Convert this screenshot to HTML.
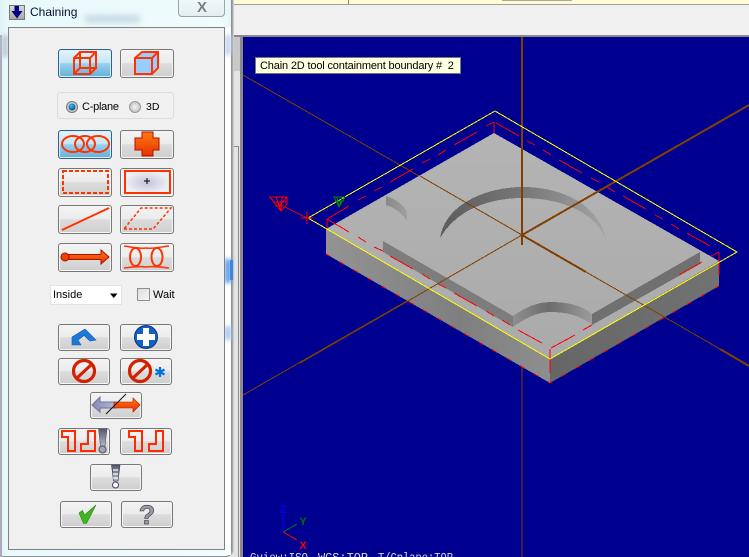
<!DOCTYPE html>
<html><head><meta charset="utf-8"><style>
html,body{margin:0;padding:0;width:749px;height:557px;overflow:hidden;background:#f0f0f0;font-family:"Liberation Sans",sans-serif}
div{position:absolute;box-sizing:border-box}
.b{border:1px solid #777;border-radius:3px;background:linear-gradient(#f3f3f3 0,#ececec 48%,#dcdcdc 50%,#cfcfcf 100%);box-shadow:inset 0 0 0 1px #f6f6f6}
.a{border:1px solid #2c628b;border-radius:3px;background:linear-gradient(#e5f4fc 0,#c4e5f6 48%,#98d1ef 50%,#66afd7 100%);box-shadow:inset 0 0 0 1px #d8eef8}
.t{font-size:11px;color:#000;white-space:nowrap;line-height:14px}
svg{position:absolute;left:0;top:0}
</style></head><body>
<!-- background app -->
<div style="left:232px;top:0;width:517px;height:4px;background:#fdfcd2"></div>
<div style="left:232px;top:4px;width:517px;height:1px;background:#a0a0a0"></div>
<div style="left:348px;top:0;width:1px;height:4px;background:#888"></div>
<div style="left:502px;top:0;width:70px;height:1px;background:#aaa"></div>
<div style="left:232px;top:5px;width:517px;height:30px;background:#f0f0f0"></div>
<div style="left:232px;top:35px;width:517px;height:2px;background:#8a8a8a"></div>
<div style="left:232px;top:37px;width:9px;height:520px;background:#e4e4e4"></div>
<div style="left:232px;top:37px;width:9px;height:34px;background:#c8c8c8"></div>
<div style="left:238px;top:146px;width:1px;height:411px;background:#8a8a8a"></div>
<div style="left:232px;top:146px;width:6px;height:1px;background:#8a8a8a"></div>
<div style="left:240px;top:35px;width:3px;height:522px;background:#8a8a8a"></div>
<div style="left:243px;top:37px;width:506px;height:520px;background:#000090"></div>

<!-- CAD viewport -->
<svg width="749" height="557" viewBox="0 0 749 557" style="shape-rendering:crispEdges">
<defs>
<linearGradient id="gl" x1="0" x2="1" y1="0" y2="0"><stop offset="0" stop-color="#939393"/><stop offset=".6" stop-color="#7f7f7f"/><stop offset="1" stop-color="#8e8e8e"/></linearGradient>
<linearGradient id="gr" x1="0" x2="1" y1="0" y2="0"><stop offset="0" stop-color="#666"/><stop offset="1" stop-color="#727272"/></linearGradient>
<linearGradient id="gtop" x1="0" x2="0" y1="0" y2="1"><stop offset="0" stop-color="#b4b4b4"/><stop offset="1" stop-color="#aaa"/></linearGradient>
<linearGradient id="ga" x1="0" x2="1" y1="0" y2="0"><stop offset="0" stop-color="#5c5c5c"/><stop offset=".5" stop-color="#777"/><stop offset="1" stop-color="#a4a4a4"/></linearGradient>
<linearGradient id="gb" x1="0" x2="1" y1="0" y2="0"><stop offset="0" stop-color="#8f8f8f"/><stop offset=".45" stop-color="#6c6c6c"/><stop offset="1" stop-color="#9c9c9c"/></linearGradient>
<linearGradient id="gc" x1="0" x2="1" y1="0" y2="0"><stop offset="0" stop-color="#888"/><stop offset="1" stop-color="#a0a0a0"/></linearGradient>
</defs>
<g fill="none" stroke="#804000">
<path d="M243,75L522,235"/>
<path d="M243,395L522,235"/>
</g>
<path d="M522,367V557" stroke="#804000" stroke-width="1"/>
<path d="M326,229L550,359V383L326,254Z" fill="url(#gl)"/>
<path d="M550,359L719,261V286L550,383Z" fill="url(#gr)"/>
<path d="M494,133L326,229L550,359L719,261Z" fill="url(#gtop)"/>
<path d="M326,254L550,383L719,286" fill="none" stroke="#f00" stroke-dasharray="5 11"/>
<!-- walls -->
<path d="M440,238C445,205 485,187 523,187C565,187 600,207 606,240C596,212 560,198 523,198C485,198 455,212 440,238Z" fill="url(#ga)"/>
<path d="M386,196C396,199 405,206 407,213V221C402,213 394,207 386,205Z" fill="url(#gc)"/>
<path d="M383,241L513,316V327L383,252Z" fill="#7d7d7d"/>
<path d="M513,316C525,307 538,302 550,302C567,302 582,305 592,314V325C582,316 567,312 550,312C538,312 525,318 513,327Z" fill="url(#gb)"/>
<path d="M592,314L700,252V264L592,325Z" fill="#707070"/>
<!-- red chain -->
<g fill="none" stroke="#f00" stroke-width="1">
<path d="M327,219L349,206M358,200L366,196M374,191L382,187M390,182L413,169M422,163L430,159M438,155L446,150M454,145L477,132M486,126L494,122"/>
<path d="M496,123L519,136M527,141L535,145M543,150L551,155M559,160L582,173M591,178L599,182M607,187L615,192M623,196L646,209M655,215L663,219M671,224L679,229M687,233L710,246"/>
<path d="M327,219L349,232M358,237L366,242M374,247L383,251M390,256L413,269M422,274L430,279M438,284L446,288M454,293L477,306M486,311L494,316M502,320L510,325M518,330L542,343"/>
<path d="M551,348L575,335M583,330L592,325M679,275L702,262M711,256L719,252"/>
<path d="M494,122V133M327,219V229"/>
<path d="M719,252V275M550,349V373"/>
</g>
<!-- brown over -->
<g fill="none" stroke="#804000">
<path d="M420,176L522,235M408,301L522,235M408,301L300,363" stroke-width="1"/>
<path d="M522,37V245" stroke-width="2"/>
<path d="M522,235L749,105" stroke-width="2"/>
<path d="M522,235L586,272" stroke-width="2"/>
<path d="M586,272L720,349" stroke-width="1"/>
<path d="M720,349L749,366" stroke-width="2"/>
</g>
<!-- yellow -->
<path d="M495,111L308,218L550,359L737,252Z" fill="none" stroke="#ff0" stroke-width="1"/>
<!-- origin cones -->
<g fill="none" stroke="#f00" stroke-width="1">
<path d="M307,212V224M301,218H313"/>
<path d="M307,218L285,207"/>
<path d="M270,197H287V204L281,211ZM276,197L281,211M282,197L281,211M273,202L287,202M275,206L284,206M287,197L279,206"/>
</g>
<g fill="none" stroke="#080" stroke-width="1">
<path d="M334,197H345L339,207ZM337,197L339,207M342,197L339,207M335,201H344"/>
</g>
<!-- axis -->
<path d="M283,532V515" stroke="#00f"/>
<path d="M283,532L297,524" stroke="#070"/>
<path d="M283,532L297,540" stroke="#f00"/>
<g font-family="Liberation Sans" font-size="11" font-weight="bold" text-anchor="middle">
<text x="283" y="513" fill="#0000ff">Z</text>
<text x="303" y="525" fill="#007000">Y</text>
<text x="303" y="549" fill="#ff0000">X</text>
</g>
<g font-family="Liberation Mono" font-size="12" fill="#ddd" style="shape-rendering:auto">
<text x="250" y="561" textLength="58" lengthAdjust="spacingAndGlyphs">Gview:ISO</text>
<text x="318" y="561" textLength="50" lengthAdjust="spacingAndGlyphs">WCS:TOP</text>
<text x="378" y="561" textLength="75" lengthAdjust="spacingAndGlyphs">T/Cplane:TOP</text>
</g>
</svg>

<!-- tooltip -->
<div class="t" style="left:255px;top:57px;width:206px;height:17px;background:#ffffe1;border:1px solid #777;padding:1px 0 0 4px;letter-spacing:-.16px">Chain 2D tool containment boundary #&nbsp; 2</div>

<!-- dialog window -->
<div style="left:0;top:0;width:232px;height:557px;background:linear-gradient(90deg,#dff3f6 0,#e8f9fb 3%,#f0fcfd 96%,#e4f4f6 100%);border-right:1px solid #8a9396;border-bottom:1px solid #8a9396;border-bottom-right-radius:7px;box-shadow:1px 0 0 #a8a8a8,2px 0 0 #ccc"></div>
<div style="left:0;top:35px;width:2px;height:522px;background:#aab"></div>
<div style="left:225px;top:27px;width:6px;height:528px;background:#fff"></div>
<div style="left:2px;top:35px;width:6px;height:22px;background:#c0c8d4;filter:blur(2px)"></div>
<div style="left:225px;top:35px;width:6px;height:20px;background:#c4d4ee;filter:blur(2px)"></div>
<div style="left:225px;top:259px;width:6px;height:24px;background:#4f9cf0;filter:blur(2px)"></div>
<div style="left:225px;top:326px;width:6px;height:14px;background:#a8c8f0;filter:blur(2px)"></div>
<div style="left:230px;top:260px;width:3px;height:20px;background:#3f86d8"></div>
<div style="left:85px;top:15px;width:55px;height:8px;background:#c8dce6;filter:blur(3px)"></div>
<!-- close -->
<div style="left:178px;top:-3px;width:47px;height:20px;border:1px solid #9aa3a6;border-radius:0 0 4px 4px;background:linear-gradient(#f2fafb,#e4eef0)"></div>
<div style="left:197px;top:0;width:14px;height:15px;font:bold 15px/15px 'Liberation Sans',sans-serif;color:#787f83;text-shadow:0 0 1px #fff">X</div>
<!-- title -->
<div style="left:9px;top:5px;width:16px;height:15px;background:linear-gradient(#d8d8d8,#a8a8a8);border:1px solid #777"></div>
<svg width="30" height="25" viewBox="0 0 30 25" style="left:0;top:0"><path d="M14.500,6H19V11H22.500L17,18.500L11.500,11H14.500Z" fill="#000080"/></svg>
<div style="left:30px;top:5px;font-size:12px;line-height:15px;color:#001030">Chaining</div>
<!-- panel -->
<div style="left:8px;top:27px;width:217px;height:523px;background:#f0f0f0;border:1px solid #808080"></div>

<!-- buttons -->
<div class="a" style="left:58px;top:49px;width:54px;height:29px"></div>
<div class="b" style="left:120px;top:49px;width:54px;height:29px"></div>
<div style="left:57px;top:92px;width:117px;height:27px;border:1px solid #dcdcdc;border-radius:3px"></div>
<div class="t" style="left:82px;top:100px;letter-spacing:-.25px">C-plane</div>
<div class="t" style="left:146px;top:100px;font-size:10.5px">3D</div>
<div class="a" style="left:58px;top:130px;width:54px;height:29px"></div>
<div class="b" style="left:120px;top:130px;width:54px;height:29px"></div>
<div class="b" style="left:58px;top:168px;width:54px;height:29px"></div>
<div class="b" style="left:120px;top:168px;width:54px;height:29px;background:radial-gradient(ellipse 22px 11px at 50% 50%,#c4c4dc,#eeeef4)"></div>
<div class="b" style="left:58px;top:205px;width:54px;height:29px"></div>
<div class="b" style="left:120px;top:205px;width:54px;height:29px"></div>
<div class="b" style="left:58px;top:243px;width:54px;height:29px"></div>
<div class="b" style="left:120px;top:243px;width:54px;height:29px"></div>
<div style="left:50px;top:285px;width:72px;height:20px;background:#fff;border:1px solid #e2e2e2"></div>
<div class="t" style="left:53px;top:288px">Inside</div>
<div style="left:137px;top:288px;width:13px;height:13px;border:1px solid #8e8f8f;background:linear-gradient(135deg,#ddd,#f6f6f6)"></div>
<div class="t" style="left:153px;top:288px">Wait</div>
<div class="b" style="left:58px;top:324px;width:52px;height:27px"></div>
<div class="b" style="left:120px;top:324px;width:52px;height:27px"></div>
<div class="b" style="left:58px;top:358px;width:52px;height:27px"></div>
<div class="b" style="left:120px;top:358px;width:52px;height:27px"></div>
<div class="b" style="left:90px;top:392px;width:52px;height:27px"></div>
<div class="b" style="left:58px;top:428px;width:52px;height:27px"></div>
<div class="b" style="left:120px;top:428px;width:52px;height:27px"></div>
<div class="b" style="left:90px;top:464px;width:52px;height:27px"></div>
<div class="b" style="left:60px;top:501px;width:52px;height:27px"></div>
<div class="b" style="left:121px;top:501px;width:52px;height:27px"></div>

<!-- icons -->
<svg width="232" height="557" viewBox="0 0 232 557">
<defs>
<linearGradient id="or" x1="0" x2="0" y1="0" y2="1"><stop offset="0" stop-color="#ff7a10"/><stop offset="1" stop-color="#e83000"/></linearGradient>
<linearGradient id="gry" x1="0" x2="0" y1="0" y2="1"><stop offset="0" stop-color="#555a70"/><stop offset="1" stop-color="#b4b8cc"/></linearGradient>
<linearGradient id="gy2" x1="0" x2="1" y1="0" y2="0"><stop offset="0" stop-color="#8888b8"/><stop offset="1" stop-color="#b8b8d4"/></linearGradient>
<radialGradient id="rb" cx=".4" cy=".35" r=".7"><stop offset="0" stop-color="#40c0f0"/><stop offset="1" stop-color="#004a80"/></radialGradient>
<radialGradient id="rg" cx=".5" cy=".5" r=".6"><stop offset="0" stop-color="#f4f4f4"/><stop offset="1" stop-color="#b8b8b8"/></radialGradient>
</defs>
<g fill="none" stroke="#ff3300" stroke-width="2">
<!-- wire cube -->
<path d="M74,58H90V74H74ZM80,52H96V68H80ZM74,58L80,52M90,58L96,52M90,74L96,68M74,74L80,68"/>
<!-- solid cube -->
<path d="M135,58L142,52H158V68L152,74H135Z" fill="#99ccff"/>
<path d="M135,58H152V74M152,58L158,52"/>
<!-- chains -->
<ellipse cx="73" cy="144" rx="11" ry="8"/>
<ellipse cx="85" cy="144" rx="10" ry="8"/>
<ellipse cx="98" cy="144" rx="11" ry="8"/>
<!-- rects -->
<rect x="63" y="171" width="45" height="22" stroke-dasharray="4 2"/>
<rect x="125" y="171" width="45" height="22"/>
<path d="M62,230L109,208"/>
<path d="M124,229H153L171,208H141Z" stroke-width="1.500" stroke-dasharray="3 2"/>
<!-- loops -->
<path d="M124,246C132,247 140,249 146,248C152,249 160,247 169,246M124,268C132,267 140,266 146,267C152,266 160,267 169,268" stroke-width="1.500"/>
<ellipse cx="135.500" cy="257" rx="5.500" ry="9"/>
<ellipse cx="157" cy="257" rx="5.500" ry="9"/>
</g>
<path d="M142,132H153V138H159V150H153V156H142V150H135V138H142Z" fill="url(#or)" stroke="#b01000"/>
<path d="M147,178V184M144,181H150" stroke="#000" stroke-width="1"/>
<path d="M69,254.500H101V250L109,257L101,264V259.500H69Z" fill="url(#or)" stroke="#a81000"/>
<circle cx="65" cy="257" r="4" fill="#f04000" stroke="#a81000"/>
<!-- radios -->
<circle cx="72" cy="107" r="5.500" fill="url(#rg)" stroke="#7a7a7a"/>
<circle cx="72" cy="107" r="3.500" fill="url(#rb)"/>
<circle cx="135" cy="107" r="5.500" fill="url(#rg)" stroke="#9a9a9a"/>
<!-- dropdown arrow -->
<path d="M110,293.500H117.500L113.750,298Z" fill="#000"/>
<!-- back arrow -->
<path d="M72,337L85,329L96,340L90,341L84,335.500L78,340L81,345H72Z" fill="#1e78d8" stroke="#0f5cb0" stroke-width=".6"/>
<!-- plus circle -->
<circle cx="146" cy="337" r="11.500" fill="#0f62c4" stroke="#103080"/>
<path d="M143,328H149V334H155V340H149V346H143V340H137V334H143Z" fill="#fff"/>
<!-- no -->
<g fill="none" stroke="#d42000" stroke-width="3.200">
<circle cx="84" cy="371" r="10.500"/><path d="M77,378L92,364"/>
<circle cx="140" cy="371" r="10.500"/><path d="M133,378L148,364"/>
</g>
<path d="M160,367V377M155.500,369.500L164.500,374.500M155.500,374.500L164.500,369.500" stroke="#0070e0" stroke-width="2.200" fill="none"/>
<!-- swap -->
<path d="M92,405L100,397V402H116V408H100V412Z" fill="url(#gy2)" stroke="#7070a0"/>
<path d="M140,405L133,398V402H114V408H133V412Z" fill="url(#or)" stroke="#b01000" stroke-width=".6"/>
<path d="M106,414L126,394" stroke="#111" stroke-width="1"/>
<!-- contours -->
<g fill="none" stroke="#ff2a00" stroke-width="2">
<path d="M62,431H75V451H68V437H62Z"/>
<path d="M81,451H95V431H88V444H81Z"/>
<path d="M129,431H142V451H135V437H129Z"/>
<path d="M149,451H163V431H156V444H149Z"/>
</g>
<!-- exclamation -->
<path d="M98.500,429H107L105,446H100.500Z" fill="url(#gry)" stroke="#555"  stroke-width=".6"/>
<circle cx="102.500" cy="449.500" r="3.500" fill="#a0a4b8" stroke="#555"/>
<path d="M111.500,465H120L118,481H113.500Z" fill="url(#gry)" stroke="#334" stroke-width=".6"/>
<path d="M113,470H118M113,474H118M113,478H118" stroke="#fff" stroke-width="1.200"/>
<circle cx="115.500" cy="485" r="3" fill="#fff" stroke="#445"/>
<!-- check -->
<path d="M79,513L82.500,510.500L84.500,515L96,505L86.500,523.500H83.500Z" fill="#3fb51f" stroke="#2a8a10" stroke-width=".6"/>
<!-- help -->
<text x="147" y="524" text-anchor="middle" font-family="Liberation Sans" font-weight="bold" font-size="27" fill="#9a9aae" stroke="#444" stroke-width=".7">?</text>
</svg>
</body></html>
